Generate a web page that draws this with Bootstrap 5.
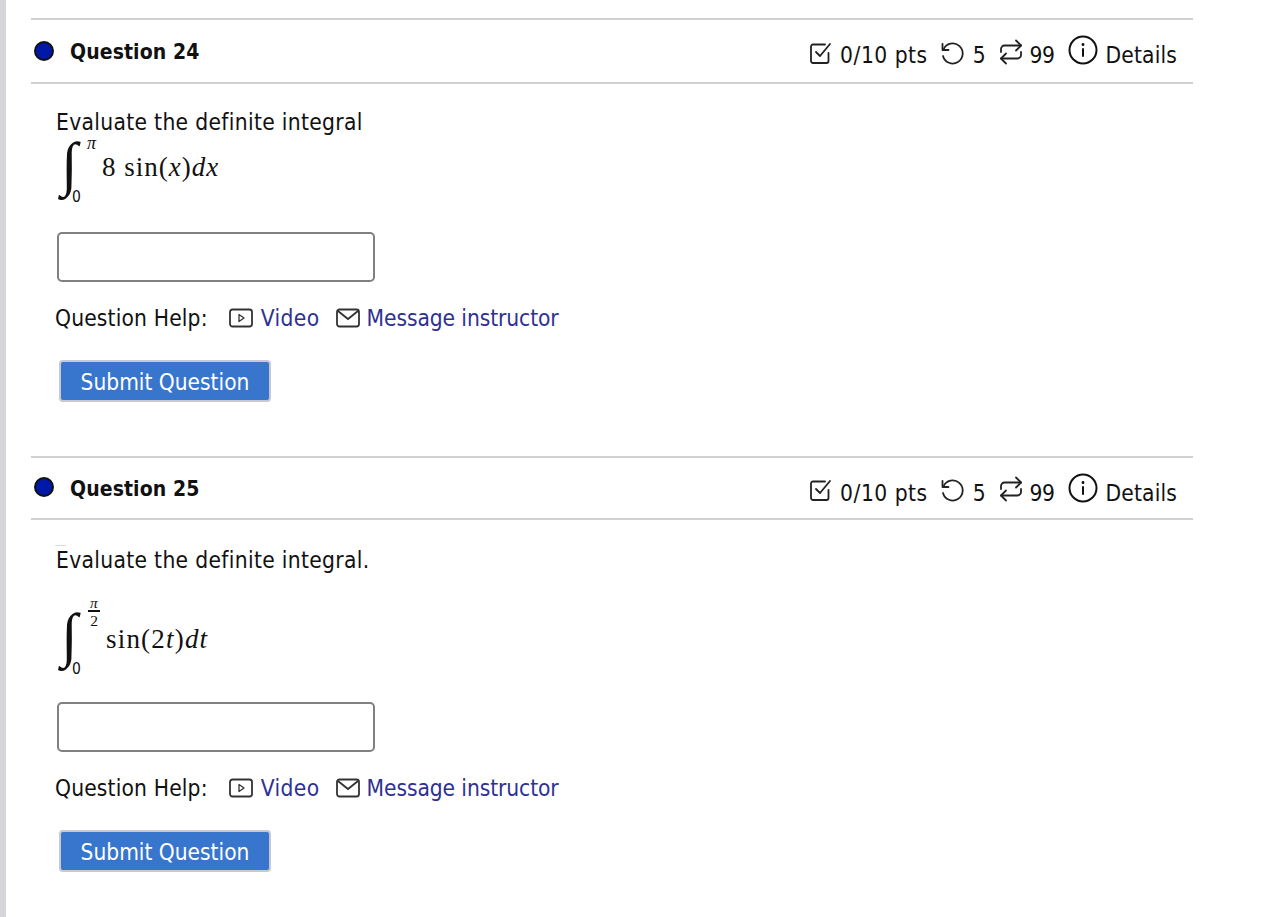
<!doctype html>
<html lang="en"><head><meta charset="utf-8"><title>Questions</title>
<link rel="stylesheet" href="https://cdn.jsdelivr.net/npm/bootstrap@5.3.0/dist/css/bootstrap.min.css">
<style>
body{font-family:"DejaVu Sans Condensed","DejaVu Sans",sans-serif;font-size:22.6px;color:#111;background:#fff;border-left:6px solid #d5d5dc;min-height:917px;line-height:28px}
.qwrap{width:1162px;margin-left:25px;padding-top:18px}
.qblock{height:438px}
.qhead{border-top:2px solid #d0d0d0;border-bottom:2px solid #d0d0d0;height:66px;padding:0 16px 0 3px}
.qblock2 .qhead{height:64px}
.qdot{width:20px;height:20px;border-radius:50%;background:#0018a8;border:2px solid #111;margin-right:16px}
.qblock2 .qdot{margin-top:-2px}
.qtitle{font-weight:700;font-size:21px;padding-top:2px;letter-spacing:.1px}
.qmeta svg{display:block;flex:none}
.qmeta span{padding-top:7px}
.qblock2 .qmeta span{padding-top:9px}
.mchk,.mrst{margin-top:4px}
.mrep{margin-top:2px}
.mpts{margin:0 12px 0 7px;letter-spacing:.5px}
.mtry{margin:0 13px 0 9px}
.mnum{margin-left:7px;letter-spacing:-.5px}
.qmeta .qinfo{margin:0 7px 2px 14px}
.qblock2 .qmeta .qinfo{margin-bottom:1px}
.mdet{letter-spacing:.15px}
.qbody{padding-left:25px;padding-top:24px}
.qblock2 .qbody{padding-top:26px}
.qintro{letter-spacing:.32px}
.qfaint{width:11px;height:1px;background:#ddd;margin:-1px 0 0 -1px}
.mline{height:72px;font-family:"Liberation Serif",serif;font-size:27px;letter-spacing:1px;line-height:1}
.mint{font-size:60px;line-height:1;font-style:normal;width:24px;letter-spacing:-6px;padding-left:5px;margin-top:-16px}
.mline2 .mint{margin-top:-10px}
.mlim{width:30px;height:72px;margin-left:-8px;font-size:15.5px;line-height:18px;letter-spacing:0;padding:0 0 2px 0;font-family:"DejaVu Sans Condensed",sans-serif}
.mline2 .mlim{padding-bottom:0;margin-bottom:-2px;height:74px}
.mlim i{padding-left:15px;margin-top:-2px;font-family:"Liberation Serif",serif;font-size:18px}
.mfrac{font-family:"Liberation Serif",serif;font-size:15.5px;line-height:13px;width:12px;margin:-7px 0 0 16px;text-align:center}
.mfrac i{padding:0;margin:0;font-size:15.5px;display:block;border-bottom:2px solid #111;padding-bottom:2px;line-height:11px;margin-bottom:2px}
.mtext{padding-bottom:10px}
.mline2{margin-top:30px}
.mline2 .mtext{margin-left:4px;padding-bottom:2px;letter-spacing:1.2px}
.ansbox{width:318px;height:50px;border:2px solid #808080;border-radius:5px;background:#fff;display:block;margin:24px 0 0 1px}
.mline2 + .ansbox{margin-top:26px}
.qhelp{color:#111;margin:22px 0 0 -1px;letter-spacing:.15px}
.qhelp a{color:#2e3192;text-decoration:none}
.qhelp svg{flex:none}
.hvid{margin-left:21px}
.hvlink{margin-left:8px;letter-spacing:.4px}
.hmail{margin-left:16px}
.hmlink{margin-left:7px}
.qhelp a.hmlink{letter-spacing:-.1px}
.qsubmit{background:#3776cc;color:#fff;border:2px solid #c8c8d0;border-radius:4px;height:42px;width:212px;font-size:22.5px;padding:2px 0 0;line-height:1;margin:28px 0 0 3px}
.qsubmit:hover{background:#3776cc;color:#fff;border-color:#c8c8d0}
</style></head><body>
<main class="qwrap">
<section class="qblock">
<div class="qhead d-flex align-items-center justify-content-between">
 <div class="d-flex align-items-center"><span class="qdot"></span><span class="qtitle">Question 24</span></div>
 <div class="qmeta d-flex align-items-center">
  <svg class="mchk" width="24" height="24" viewBox="0 0 24 24" fill="none" stroke="#222" stroke-width="1.8" stroke-linecap="round" stroke-linejoin="round"><path d="M19.500 12v8a2 2 0 0 1-2 2H4a2 2 0 0 1-2-2V5.500a2 2 0 0 1 2-2h12"/><path d="M7 11l4 4 10-12"/></svg>
  <span class="mpts">0/10 pts</span>
  <svg class="mrst" width="24" height="24" viewBox="0 0 24 24" fill="none" stroke="#222" stroke-width="1.8" stroke-linecap="round" stroke-linejoin="round"><path d="M3.500 8.500A10 10 0 1 1 3 15"/><path d="M2.500 3v6h6"/></svg>
  <span class="mtry">5</span>
  <svg class="mrep" width="24" height="26" viewBox="0 0 24 26" fill="none" stroke="#222" stroke-width="1.8" stroke-linecap="round" stroke-linejoin="round"><path d="M2 13V10a3.500 3.500 0 0 1 3.500-3.500H22"/><path d="M17 1.500l5 5-5 5"/><path d="M22 13v3a3.500 3.500 0 0 1-3.500 3.500H2"/><path d="M7 14.500l-5 5 5 5"/></svg>
  <span class="mnum">99</span>
  <svg class="qinfo" width="30" height="30" viewBox="0 0 30 30" fill="none" stroke="#111" stroke-width="2" stroke-linecap="round"><circle cx="15" cy="15" r="13.500"/><path d="M15 14v7"/><path d="M15 9.500v.2" stroke-width="2.800"/></svg>
  <span class="mdet">Details</span>
 </div>
</div>
<div class="qbody">
 <div class="qintro">Evaluate the definite integral</div>
 <div class="mline d-flex align-items-center"><span class="mint">∫</span><span class="mlim d-flex flex-column justify-content-between"><i>π</i><span>0</span></span><span class="mtext">8 sin(<i>x</i>)<i>dx</i></span></div>
 <input class="ansbox" type="text" aria-label="Answer">
 <div class="qhelp d-flex align-items-center">Question Help:
  <svg class="hvid" width="24" height="20" viewBox="0 0 24 20" fill="none" stroke="#333" stroke-width="1.8"><rect x="1" y="1.500" width="22" height="17" rx="2.500"/><path d="M10 6.500v7l5-3.500z" stroke-width="1.300" stroke-linejoin="round"/></svg>
  <a class="hvlink" href="#">Video</a>
  <svg class="hmail" width="24" height="20" viewBox="0 0 24 20" fill="none" stroke="#333" stroke-width="1.8"><rect x="1" y="1.500" width="22" height="17" rx="2.500"/><path d="M2 3l10 8 10-8"/></svg>
  <a class="hmlink" href="#">Message instructor</a>
 </div>
 <button class="qsubmit btn" type="button">Submit Question</button>
</div>
</section>
<section class="qblock qblock2">
<div class="qhead d-flex align-items-center justify-content-between">
 <div class="d-flex align-items-center"><span class="qdot"></span><span class="qtitle">Question 25</span></div>
 <div class="qmeta d-flex align-items-center">
  <svg class="mchk" width="24" height="24" viewBox="0 0 24 24" fill="none" stroke="#222" stroke-width="1.8" stroke-linecap="round" stroke-linejoin="round"><path d="M19.500 12v8a2 2 0 0 1-2 2H4a2 2 0 0 1-2-2V5.500a2 2 0 0 1 2-2h12"/><path d="M7 11l4 4 10-12"/></svg>
  <span class="mpts">0/10 pts</span>
  <svg class="mrst" width="24" height="24" viewBox="0 0 24 24" fill="none" stroke="#222" stroke-width="1.8" stroke-linecap="round" stroke-linejoin="round"><path d="M3.500 8.500A10 10 0 1 1 3 15"/><path d="M2.500 3v6h6"/></svg>
  <span class="mtry">5</span>
  <svg class="mrep" width="24" height="26" viewBox="0 0 24 26" fill="none" stroke="#222" stroke-width="1.8" stroke-linecap="round" stroke-linejoin="round"><path d="M2 13V10a3.500 3.500 0 0 1 3.500-3.500H22"/><path d="M17 1.500l5 5-5 5"/><path d="M22 13v3a3.500 3.500 0 0 1-3.500 3.500H2"/><path d="M7 14.500l-5 5 5 5"/></svg>
  <span class="mnum">99</span>
  <svg class="qinfo" width="30" height="30" viewBox="0 0 30 30" fill="none" stroke="#111" stroke-width="2" stroke-linecap="round"><circle cx="15" cy="15" r="13.500"/><path d="M15 14v7"/><path d="M15 9.500v.2" stroke-width="2.800"/></svg>
  <span class="mdet">Details</span>
 </div>
</div>
<div class="qbody">
 <div class="qfaint"></div>
 <div class="qintro">Evaluate the definite integral.</div>
 <div class="mline mline2 d-flex align-items-center"><span class="mint">∫</span><span class="mlim d-flex flex-column justify-content-between"><span class="mfrac"><i>π</i>2</span><span>0</span></span><span class="mtext">sin(2<i>t</i>)<i>dt</i></span></div>
 <input class="ansbox" type="text" aria-label="Answer">
 <div class="qhelp d-flex align-items-center">Question Help:
  <svg class="hvid" width="24" height="20" viewBox="0 0 24 20" fill="none" stroke="#333" stroke-width="1.8"><rect x="1" y="1.500" width="22" height="17" rx="2.500"/><path d="M10 6.500v7l5-3.500z" stroke-width="1.300" stroke-linejoin="round"/></svg>
  <a class="hvlink" href="#">Video</a>
  <svg class="hmail" width="24" height="20" viewBox="0 0 24 20" fill="none" stroke="#333" stroke-width="1.8"><rect x="1" y="1.500" width="22" height="17" rx="2.500"/><path d="M2 3l10 8 10-8"/></svg>
  <a class="hmlink" href="#">Message instructor</a>
 </div>
 <button class="qsubmit btn" type="button">Submit Question</button>
</div>
</section>
</main>
<script src="https://cdn.jsdelivr.net/npm/bootstrap@5.3.0/dist/js/bootstrap.bundle.min.js"></script>
</body></html>
